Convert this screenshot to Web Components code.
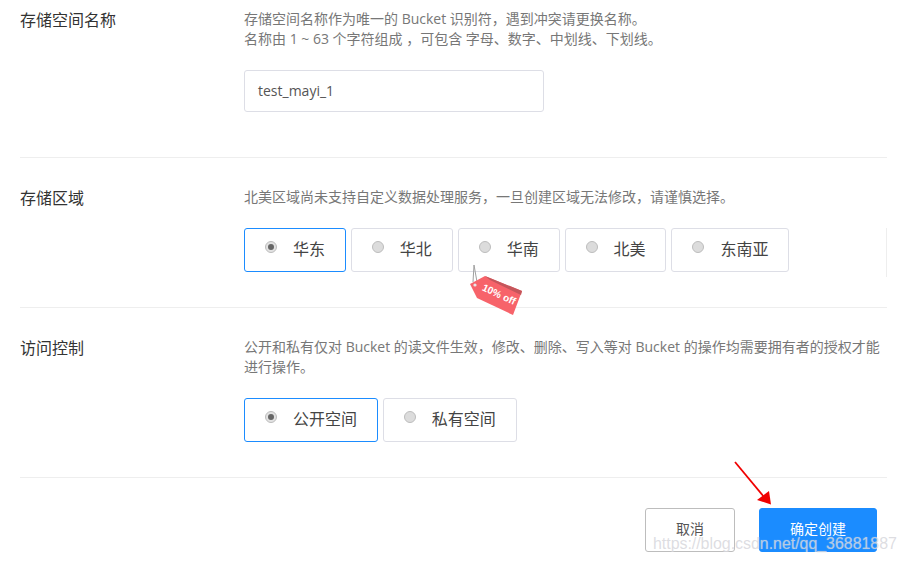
<!DOCTYPE html>
<html lang="zh">
<head>
<meta charset="utf-8">
<title>创建存储空间</title>
<style>
html,body{margin:0;padding:0;background:#fff;}
body{font-family:"Open Sans","Noto Sans CJK SC",sans-serif;width:906px;height:562px;overflow:hidden;position:relative;}
</style>
</head>
<body>
<create-page>
  <form-row label="存储空间名称" style="--top:9px;--bottom:45px">
    <form-hint>存储空间名称作为唯一的 Bucket 识别符，遇到冲突请更换名称。<br>名称由 1 ~ 63 个字符组成 ，可包含 字母、数字、中划线、下划线。</form-hint>
    <text-field value="test_mayi_1"></text-field>
  </form-row>
  <form-row label="存储区域" style="--top:29px;--bottom:30px">
    <form-hint>北美区域尚未支持自定义数据处理服务，一旦创建区域无法修改，请谨慎选择。</form-hint>
    <radio-group edge>
      <radio-card checked>华东</radio-card>
      <radio-card>华北</radio-card>
      <radio-card>华南<discount-tag></discount-tag></radio-card>
      <radio-card>北美</radio-card>
      <radio-card>东南亚</radio-card>
    </radio-group>
  </form-row>
  <form-row label="访问控制" style="--top:29px;--bottom:30px">
    <form-hint>公开和私有仅对 Bucket 的读文件生效，修改、删除、写入等对 Bucket 的操作均需要拥有者的授权才能进行操作。</form-hint>
    <radio-group>
      <radio-card checked>公开空间</radio-card>
      <radio-card>私有空间</radio-card>
    </radio-group>
  </form-row>
  <form-actions>
    <action-button>取消</action-button>
    <action-button primary>确定创建</action-button>
  </form-actions>
  <red-arrow></red-arrow>
  <water-mark>https://blog.csdn.net/qq_36881887</water-mark>
</create-page>
<script>
function def(name, css, html, extra){
  class E extends HTMLElement{
    constructor(){
      super();
      const s=this.attachShadow({mode:"open"});
      s.innerHTML="<style>"+css+"</style>"+(typeof html==="function"?html(this):html);
    }
    connectedCallback(){ if(extra) extra(this); }
  }
  customElements.define(name,E);
}
def("create-page",
 ":host{display:block;width:867px;padding:0 19px 0 20px;position:relative;box-sizing:content-box}",
 "<slot></slot>");
def("form-row",
 ":host{display:grid;grid-template-columns:224px 1fr;padding:var(--top) 0 var(--bottom);border-bottom:1px solid #eeeeee}"+
 ".label{font-size:16px;line-height:22px;color:#333;padding-top:0}"+
 ".body{display:flex;flex-direction:column;gap:21px;min-width:0}",
 "<div class='label'></div><div class='body'><slot></slot></div>",
 el=>{el.shadowRoot.querySelector(".label").textContent=el.getAttribute("label");});
def("form-hint",
 ":host{display:block;font-size:14px;line-height:20px;color:#777}",
 "<slot></slot>");
def("text-field",
 ":host{display:flex;align-items:center;box-sizing:border-box;width:300px;height:42px;padding:0 13px 2px;border:1px solid #dddee6;border-radius:3px;font-size:14px;color:#555}",
 "<span id='v'></span>",
 el=>{el.shadowRoot.getElementById("v").textContent=el.getAttribute("value");});
def("radio-group",
 ":host{display:flex;gap:5px;height:49px;align-items:flex-start;box-sizing:border-box}"+
 ":host([edge]){border-right:1px solid #eeeeee}",
 "<slot></slot>");
def("radio-card",
 ":host{display:flex;align-items:center;box-sizing:border-box;height:44px;padding:0 19.85px 5px 20px;border:1px solid #dddee6;border-radius:3px;font-size:16px;color:#444;position:relative;background:#fff}"+
 ":host([checked]){border-color:#1b8cff}"+
 ".dot{box-sizing:border-box;width:12px;height:12px;border-radius:50%;background:#dcdcdc;border:1px solid #bdbdbd;margin:-1px 16px 0 0;display:flex;align-items:center;justify-content:center;flex:none}"+
 ":host([checked]) .dot{background:#e2e2e2}"+
 ":host([checked]) .dot::after{content:'';width:6px;height:6px;border-radius:50%;background:#666}",
 "<span class='dot'></span><slot></slot>");
def("discount-tag",
 ":host{display:block;position:absolute;left:6.5px;top:32px;width:60px;height:56px}"+
 "svg{display:block}"+
 "text{font:700 10px 'Liberation Sans',sans-serif;fill:#fff}",
 `<svg width="60" height="56" viewBox="0 0 60 56">
   <path d="M9 4 L12 21 M9 4 L8 21" stroke="#a0a0a0" stroke-width="1" fill="none"/>
   <path d="M5 23 L20 15 L57 30 L48 54 L12 37 Z" fill="#f7636a"/>
   <path d="M20 15 L57 30 L56 34 L25 19 Z" fill="#c4565b"/>
   <circle cx="10" cy="24" r="1.6" fill="#e8e8e8"/>
   <text transform="translate(16.5 29) rotate(25)">10% off</text>
 </svg>`);
def("form-actions",
 ":host{display:flex;justify-content:flex-end;gap:24px;padding:30px 10px 0 0}",
 "<slot></slot>");
def("action-button",
 ":host{display:flex;align-items:center;justify-content:center;box-sizing:border-box;height:44px;width:90px;padding-bottom:4px;border:1px solid #bdbdbd;border-radius:3px;font-size:14px;color:#555;background:#fff}"+
 ":host([primary]){width:118px;background:#1b8cff;border-color:#1b8cff;color:#fff}",
 "<slot></slot>");
def("red-arrow",
 ":host{display:block;position:absolute;left:730px;top:458px;width:45px;height:50px}",
 `<svg width="45" height="50" viewBox="0 0 45 50">
   <path d="M5 4 L34 39" stroke="#f00000" stroke-width="1.8" fill="none"/>
   <path d="M41 46.5 L27 42 L39 33 Z" fill="#f00000"/>
 </svg>`);
def("water-mark",
 ":host{display:block;position:absolute;left:653px;top:534px;font:16px/20px 'Liberation Sans',sans-serif;color:rgba(208,208,214,.72);white-space:nowrap;letter-spacing:-.05px;text-shadow:0 0 1px rgba(255,255,255,.5)}",
 "<slot></slot>");
</script>
</body>
</html>
